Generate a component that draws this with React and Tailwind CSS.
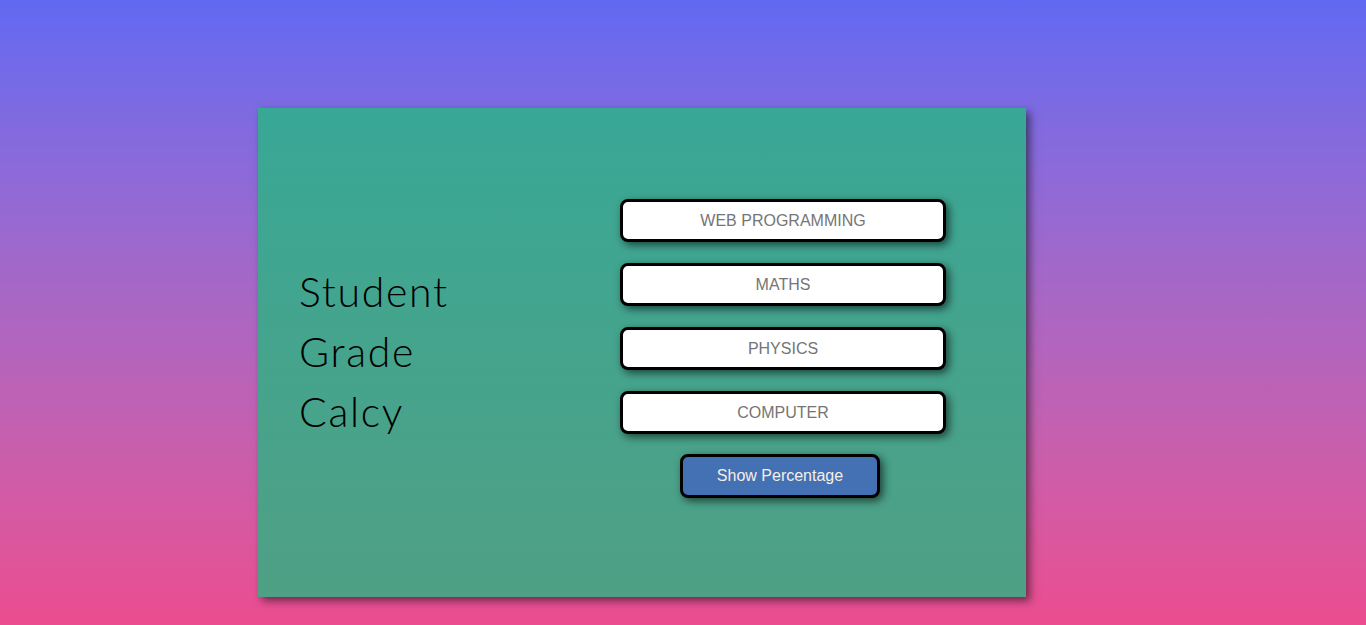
export default function App() {
  const subjects = ['WEB PROGRAMMING', 'MATHS', 'PHYSICS', 'COMPUTER'];

  return (
    <div className="min-h-screen bg-gradient-to-b from-[#6169f2] to-[#ec4c8f] pt-[108px] font-['Liberation_Sans',Arial,sans-serif]">
      <div className="ml-[258px] flex h-[489px] w-[768px] items-center bg-gradient-to-b from-[#38a896] to-[#4fa084] shadow-[4px_4px_8px_rgba(0,0,0,0.5)]">
        <div className="w-[362px] pl-[41px] pb-[2px]">
          <h1 className="font-['Lato','Open_Sans',sans-serif] text-[41px] font-light leading-[60px] tracking-[1.7px] text-black">
            Student
            <br />
            Grade
            <br />
            Calcy
          </h1>
        </div>

        <div className="flex w-[326px] flex-col items-center gap-[21px] self-start pt-[91px]">
          {subjects.map(s => (
            <input
              key={s}
              placeholder={s}
              className="h-[43px] w-full rounded-[8px] border-[3px] border-black bg-white text-center text-[16px] text-gray-700 placeholder:text-[#757575] shadow-[3px_3px_8px_rgba(0,0,0,0.6)] outline-none"
            />
          ))}
          <button className="-mt-px mr-[6px] h-[44px] w-[200px] rounded-[8px] border-[3px] border-black bg-[#4470b4] text-[16px] text-[#f5efe6] shadow-[3px_3px_8px_rgba(0,0,0,0.6)]">
            Show Percentage
          </button>
        </div>
      </div>
    </div>
  );
}
